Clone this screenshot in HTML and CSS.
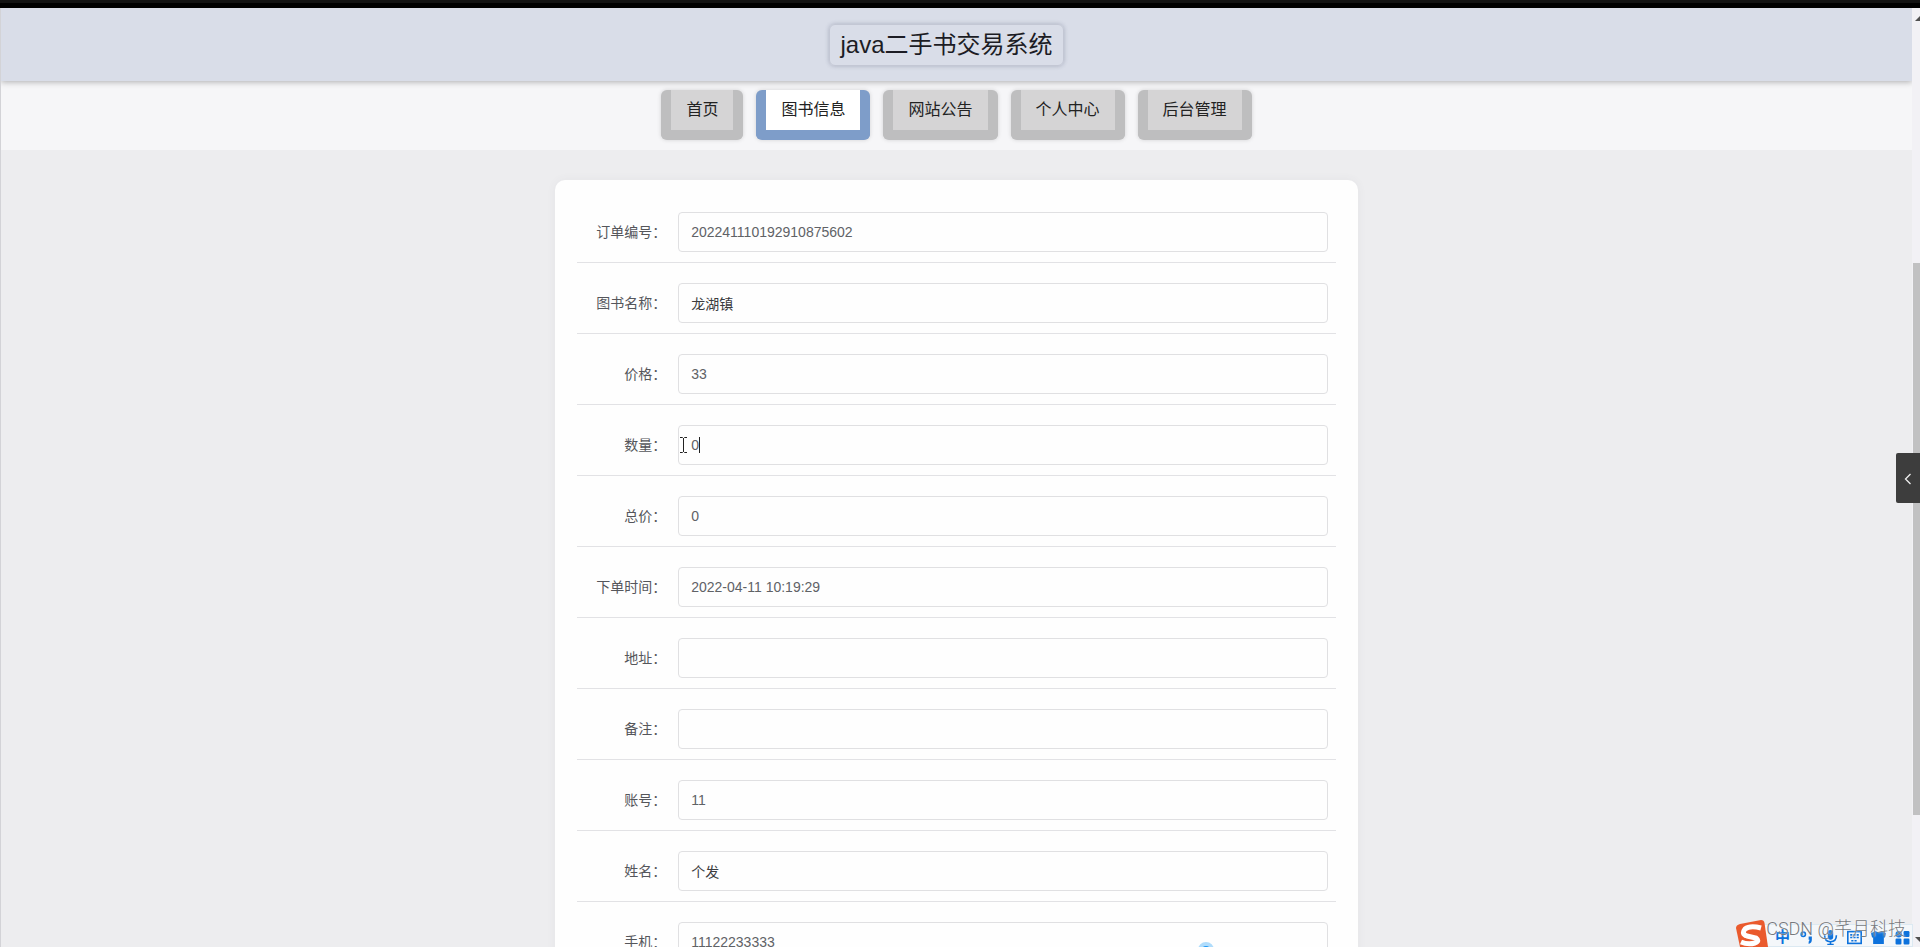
FILE: index.html
```html
<!DOCTYPE html>
<html lang="zh-CN">
<head>
<meta charset="utf-8">
<title>java二手书交易系统</title>
<link rel="stylesheet" href="styles.css">
</head>
<body>
<div class="letterbox"></div>
<div class="viewport">
  <div class="page">
    <header class="header"><h1 class="title">java二手书交易系统</h1></header>
    <nav class="nav">
      <a class="tab" href="#">首页</a>
      <a class="tab active" href="#">图书信息</a>
      <a class="tab" href="#">网站公告</a>
      <a class="tab" href="#">个人中心</a>
      <a class="tab" href="#">后台管理</a>
    </nav>
    <main class="main">
      <form class="card">
        <div class="row"><label for="f1">订单编号：</label><input id="f1" value="202241110192910875602"></div>
        <div class="row"><label for="f2">图书名称：</label><input id="f2" class="dark" value="龙湖镇"></div>
        <div class="row"><label for="f3">价格：</label><input id="f3" value="33"></div>
        <div class="row"><label for="f4">数量：</label><input id="f4" value="0">
          <svg class="ibeam" viewBox="0 0 20 18"><path d="M0 1.500h2.500l1 1 1-1H7M3.500 2v14M0 16.500h2.500l1-1 1 1H7" fill="none" stroke="#222"/><path d="M19.500 1v16" stroke="#222"/></svg>
        </div>
        <div class="row"><label for="f5">总价：</label><input id="f5" value="0"></div>
        <div class="row"><label for="f6">下单时间：</label><input id="f6" value="2022-04-11 10:19:29"></div>
        <div class="row"><label for="f7">地址：</label><input id="f7"></div>
        <div class="row"><label for="f8">备注：</label><input id="f8"></div>
        <div class="row"><label for="f9">账号：</label><input id="f9" value="11"></div>
        <div class="row"><label for="f10">姓名：</label><input id="f10" class="dark" value="个发"></div>
        <div class="row"><label for="f11">手机：</label><input id="f11" value="11122233333"></div>
      </form>
    </main>
  </div>
  <div class="scrollbar">
    <svg viewBox="0 0 8 8"><path d="M8 1v5H3z" fill="#505050"/></svg>
    <div class="track"><div class="thumb"></div></div>
    <svg viewBox="0 0 8 8"><path d="M8 7V2H3z" fill="#505050"/></svg>
  </div>
</div>
<button class="drawer" type="button" aria-label="展开"><svg viewBox="0 0 8 12"><path d="M6.500 1 1.500 6l5 5" fill="none" stroke="#eee" stroke-width="1.300"/></svg></button>
<div class="bubble"></div>
<div class="ime">
  <svg class="sogou" viewBox="0 0 32 27"><path d="M4 4 25 0q3 0 3.500 3L32 27H4L0 8q0-3 4-4z" fill="#ea5a2d"/><path d="M25 8Q14 5 9 9q-4 5 2 7l9 2q4 3-1 5-7 2-14-1" fill="none" stroke="#fff" stroke-width="5"/></svg>
  <span class="zh">中</span>
  <svg class="glyph" viewBox="0 0 14 14"><circle cx="4" cy="4" r="2" fill="none" stroke="#0d72dc" stroke-width="1.500"/><path d="M9 6h3v3q0 3-3 4v-2l1-2H9z" fill="#0d72dc"/></svg>
  <svg class="glyph" viewBox="0 0 14 14"><rect x="4.500" width="5" height="9" rx="2.500" fill="#0d72dc"/><path d="M1.500 5q0 6 5.500 6t5.500-6M7 11v3M4 13.500h6" fill="none" stroke="#0d72dc" stroke-width="1.500"/></svg>
  <svg class="glyph" viewBox="0 0 14 14"><rect x=".75" y="1.500" width="12.500" height="11" fill="none" stroke="#0d72dc" stroke-width="1.500"/><path d="M3 4.500h8M3 7h8M4 10h6" stroke="#0d72dc" stroke-width="1.500" stroke-dasharray="2 1"/></svg>
  <svg class="glyph" viewBox="0 0 14 14"><path d="m0 3 4-2q3 2 6 0l4 2-1 4h-1v6H2V7H1z" fill="#0d72dc"/></svg>
  <svg class="glyph" viewBox="0 0 14 14"><g fill="#0d72dc"><circle cx="3.500" cy="4" r="3"/><rect x="8" y="1" width="5.500" height="5.500" rx="1"/><rect x=".5" y="8" width="5.500" height="5.500" rx="1"/><rect x="8" y="8" width="5.500" height="5.500" rx="1"/></g></svg>
</div>
<div class="watermark">CSDN @芊月科技</div>
</body>
</html>
```
FILE: styles.css
```css
* { box-sizing: border-box; }
html { height: 100%; }
body {
  margin: 0;
  height: 100%;
  overflow: hidden;
  display: flex;
  flex-direction: column;
  background: #ededef;
  font-family: "Liberation Sans", "Noto Sans CJK SC", sans-serif;
  font-size: 14px;
}
.letterbox { height: 8px; flex: none; background: #000; border-top: 3px solid #131313; }
.viewport { flex: 1; min-height: 0; display: flex; }
.page { flex: 1; overflow: hidden; border-left: 1px solid #d3d3d7; }
.header {
  position: relative;
  height: 73px;
  padding-right: 20px;
  display: flex;
  align-items: center;
  justify-content: center;
  background: #d9dde8;
  box-shadow: 0 1px 6px rgba(0, 0, 0, .3);
}
.title {
  margin: 0;
  padding: 0 10px;
  border: 1px solid #c3c7d4;
  border-radius: 6px;
  box-shadow: 0 0 4px rgba(60, 65, 95, .3);
  font-size: 24px;
  font-weight: 400;
  line-height: 40px;
  color: #1c1c24;
}
.nav {
  display: flex;
  justify-content: center;
  gap: 13px;
  padding: 9px 0 10px;
  background: #f6f6f8;
}
.tab {
  padding: 0 15px;
  border: 10px solid #bebebf;
  border-top: 0;
  border-radius: 6px;
  box-shadow: 0 0 4px rgba(0, 0, 0, .15);
  background: #d5d4d5;
  color: #222;
  font-size: 16px;
  line-height: 40px;
  text-decoration: none;
}
.tab.active { background: #fff; border-color: #7e9dc9; }
.main { padding-top: 30px; }
.card {
  width: 42%;
  min-width: 600px;
  margin: 0 auto;
  padding: 32px 22px;
  border-radius: 10px;
  background: #fefefe;
  box-shadow: 0 0 10px rgba(90, 90, 110, .06);
}
.row {
  position: relative;
  display: flex;
  align-items: center;
  margin-bottom: 20px;
  padding: 0 8px 10px 0;
  border-bottom: 1px solid #e2e2e5;
}
.row label {
  width: 101px;
  padding: 0 12px 3px 0;
  text-align: right;
  color: #55565b;
}
.row input {
  flex: 1;
  height: 40px;
  padding: 0 12px;
  border: 1px solid #e0e0e2;
  border-radius: 4px;
  background: #fefefe;
  font: 14px "Liberation Sans", "Noto Sans CJK SC", sans-serif;
  color: #606266;
  outline: none;
}
.row .dark { color: #3c3c3e; }
.ibeam { position: absolute; left: 103px; top: 11px; width: 20px; height: 18px; }
.scrollbar {
  width: 8px;
  display: flex;
  flex-direction: column;
  padding: 7px 0 4px;
  background: #f2f1f5;
}
.scrollbar svg { width: 8px; height: 8px; flex: none; }
.track { flex: 1; padding: 240px 0 0 1px; }
.thumb { height: 552px; background: #c1c1c2; }
.drawer {
  position: absolute;
  right: 0;
  top: 453px;
  width: 24px;
  height: 50px;
  padding: 0;
  border: 0;
  border-radius: 2px 0 0 2px;
  background: #3d3d3d;
}
.drawer svg { width: 8px; height: 12px; vertical-align: middle; }
.bubble {
  position: absolute;
  left: 1198px;
  bottom: -11px;
  width: 16px;
  height: 16px;
  border-radius: 50%;
  border: 4px solid #b0dcfb;
  background: #1b98f5;
}
.ime {
  position: absolute;
  right: 7px;
  bottom: 0;
  height: 27px;
  display: flex;
  align-items: center;
  gap: 9px;
  padding-right: 3px;
}
.ime::before {
  content: "";
  position: absolute;
  left: 24px;
  right: 0;
  top: 4px;
  bottom: 0;
  background: #f4f7fa;
  border: 1px solid #dce9f2;
}
.sogou { position: relative; width: 32px; height: 27px; margin-right: -2px; }
.zh { position: relative; margin: 6px 0 0; width: 15px; font-size: 15px; line-height: 15px; font-weight: 700; color: #0d72dc; }
.glyph { position: relative; width: 15px; height: 15px; margin-top: 7px; }
.watermark {
  position: absolute;
  right: 14px;
  bottom: 5px;
  font: 300 18px/26px Roboto, "Noto Sans CJK SC", sans-serif;
  color: #77797d;
  text-shadow: 0 0 2px #fff;
}
```
